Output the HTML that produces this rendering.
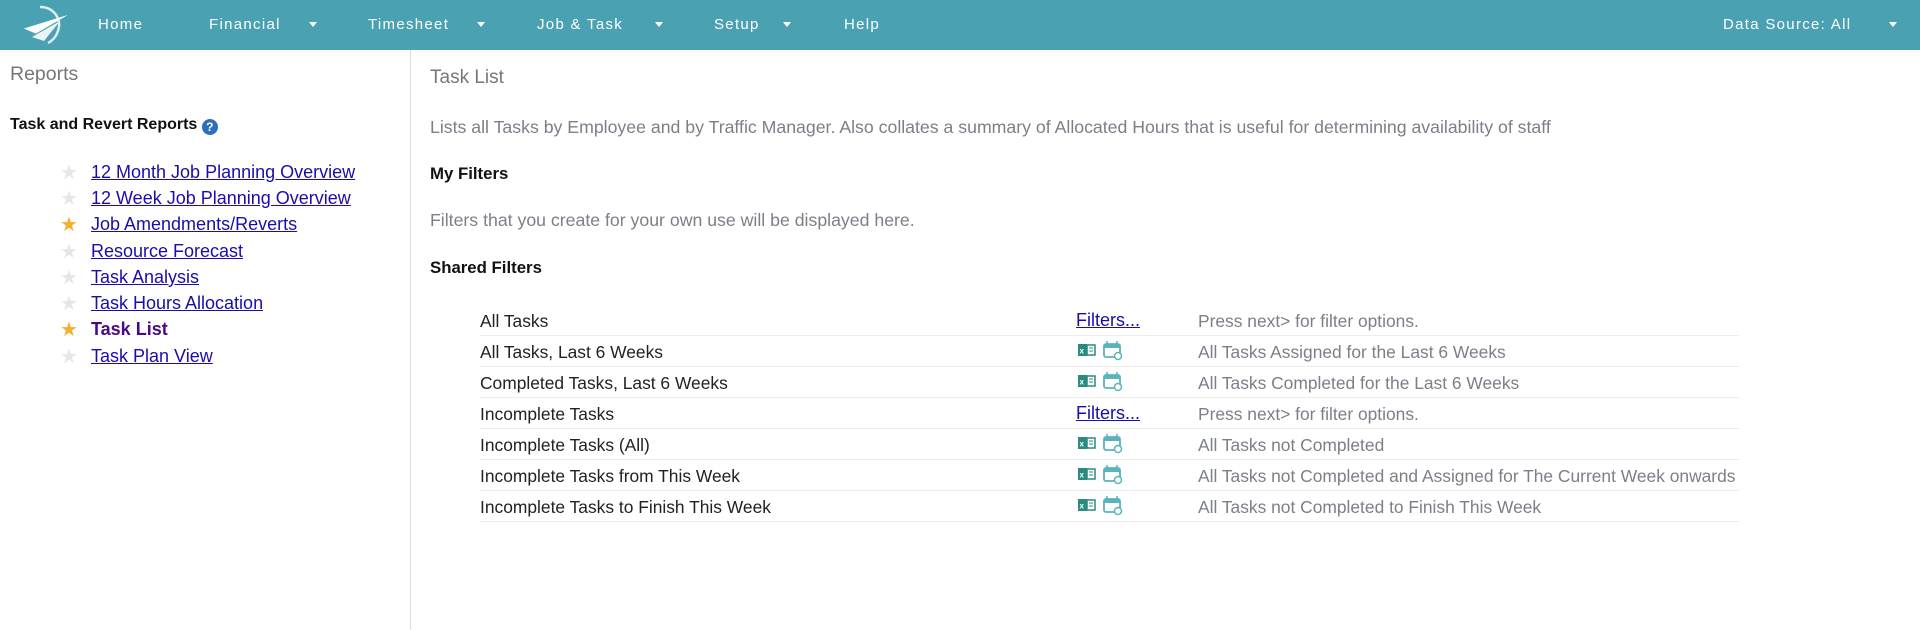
<!DOCTYPE html>
<html><head><meta charset="utf-8"><style>
*{margin:0;padding:0;box-sizing:border-box}
body{width:1920px;height:630px;background:#fff;font-family:"Liberation Sans",sans-serif;position:relative;overflow:hidden;color:#222}
.a{position:absolute;white-space:nowrap}
#nav{position:absolute;left:0;top:0;width:1920px;height:50px;background:#4aa1b1}
.n{position:absolute;top:16px;color:#fff;font-size:15px;letter-spacing:1.3px}
.ar{position:absolute;top:22px;width:0;height:0;border-left:4px solid transparent;border-right:4px solid transparent;border-top:5px solid #fff}
#side{position:absolute;left:410px;top:50px;width:1px;height:580px;background:#ddd}
.li{position:absolute;left:91px;font-size:18px;color:#1a0dab;text-decoration:underline}
.st{position:absolute;left:60px;font-size:20px;color:#e6e6e6}
.st.g{color:#f5ae2e}
.r{position:absolute;left:480px;width:1259px;height:31px;border-bottom:1px solid #ececec;font-size:17.4px}
.r .c1{position:absolute;left:0;top:6px;color:#222}
.r .c2{position:absolute;left:596px;top:5px;color:#1a0dab;text-decoration:underline;font-size:18px}
.r .c3{position:absolute;left:718px;top:6px;color:#7b7f88}
.ic{position:absolute;left:598px;top:5px}
.gr{color:#7b7f88}
</style></head><body>
<div id="nav">
<svg class="a" style="left:14px;top:3px" width="56" height="44" viewBox="0 0 56 44">
<path d="M26 4 C40 4 48 16 44 28 C42 34 38 38 34 40" fill="none" stroke="#d8eef2" stroke-width="2.5"/>
<path d="M14 30 L66 14 L28 36 Z" fill="#fff" transform="translate(-2,0) scale(0.85)"/>
<path d="M18 34 L46 18 L30 38 Z" fill="#e8f4f6"/>
</svg>
<div class="n" style="left:98px">Home</div>
<div class="n" style="left:209px">Financial</div><div class="ar" style="left:309px"></div>
<div class="n" style="left:368px">Timesheet</div><div class="ar" style="left:477px"></div>
<div class="n" style="left:537px">Job &amp; Task</div><div class="ar" style="left:655px"></div>
<div class="n" style="left:714px">Setup</div><div class="ar" style="left:783px"></div>
<div class="n" style="left:844px">Help</div>
<div class="n" style="left:1723px">Data Source: All</div><div class="ar" style="left:1889px"></div>
</div>
<div id="side"></div>
<div class="a" style="left:10px;top:63px;font-size:19.5px;color:#777">Reports</div>
<div class="a" style="left:10px;top:116px;font-size:16px;font-weight:bold;color:#111">Task and Revert Reports <span style="display:inline-block;width:16px;height:16px;border-radius:50%;background:#2d6fb8;color:#fff;font-size:12px;text-align:center;line-height:16px;vertical-align:-2px">?</span></div>
<div class="st" style="top:160px">★</div><div class="li" style="top:162px">12 Month Job Planning Overview</div>
<div class="st" style="top:186px">★</div><div class="li" style="top:188px">12 Week Job Planning Overview</div>
<div class="st g" style="top:212px">★</div><div class="li" style="top:214px">Job Amendments/Reverts</div>
<div class="st" style="top:239px">★</div><div class="li" style="top:241px">Resource Forecast</div>
<div class="st" style="top:265px">★</div><div class="li" style="top:267px">Task Analysis</div>
<div class="st" style="top:291px">★</div><div class="li" style="top:293px">Task Hours Allocation</div>
<div class="st g" style="top:317px">★</div><div class="li" style="top:319px;color:#4b0a82;font-weight:bold;text-decoration:none">Task List</div>
<div class="st" style="top:344px">★</div><div class="li" style="top:346px">Task Plan View</div>

<div class="a gr" style="left:430px;top:67px;font-size:19px;color:#777">Task List</div>
<div class="a gr" style="left:430px;top:117px;font-size:17.7px">Lists all Tasks by Employee and by Traffic Manager. Also collates a summary of Allocated Hours that is useful for determining availability of staff</div>
<div class="a" style="left:430px;top:164px;font-size:16.8px;font-weight:bold;color:#111">My Filters</div>
<div class="a gr" style="left:430px;top:210px;font-size:17.7px">Filters that you create for your own use will be displayed here.</div>
<div class="a" style="left:430px;top:258px;font-size:16.8px;font-weight:bold;color:#111">Shared Filters</div>

<svg width="0" height="0" style="position:absolute"><defs>
<g id="ic"><rect x="0" y="3" width="9" height="12" fill="#2a8a7e"/><text x="1.5" y="12.5" font-size="8" fill="#fff" font-family="Liberation Sans" font-weight="bold">x</text><rect x="9" y="4" width="8" height="10" fill="none" stroke="#2a8a7e" stroke-width="1.5"/><line x1="11" y1="7" x2="15" y2="7" stroke="#2a8a7e"/><line x1="11" y1="10" x2="15" y2="10" stroke="#2a8a7e"/>
<rect x="26" y="3" width="16" height="13" rx="2" fill="none" stroke="#5ab3bd" stroke-width="1.8"/><rect x="26" y="3" width="16" height="4" fill="#5ab3bd"/><line x1="29" y1="0" x2="29" y2="4" stroke="#5ab3bd" stroke-width="1.5"/><line x1="39" y1="0" x2="39" y2="4" stroke="#5ab3bd" stroke-width="1.5"/><circle cx="40" cy="15" r="3.5" fill="#fff" stroke="#5ab3bd" stroke-width="1.5"/></g>
</defs></svg>

<div class="r" style="top:305px"><span class="c1">All Tasks</span><span class="c2">Filters...</span><span class="c3">Press next&gt; for filter options.</span></div>
<div class="r" style="top:336px"><span class="c1">All Tasks, Last 6 Weeks</span><svg class="ic" width="46" height="20"><use href="#ic"/></svg><span class="c3">All Tasks Assigned for the Last 6 Weeks</span></div>
<div class="r" style="top:367px"><span class="c1">Completed Tasks, Last 6 Weeks</span><svg class="ic" width="46" height="20"><use href="#ic"/></svg><span class="c3">All Tasks Completed for the Last 6 Weeks</span></div>
<div class="r" style="top:398px"><span class="c1">Incomplete Tasks</span><span class="c2">Filters...</span><span class="c3">Press next&gt; for filter options.</span></div>
<div class="r" style="top:429px"><span class="c1">Incomplete Tasks (All)</span><svg class="ic" width="46" height="20"><use href="#ic"/></svg><span class="c3">All Tasks not Completed</span></div>
<div class="r" style="top:460px"><span class="c1">Incomplete Tasks from This Week</span><svg class="ic" width="46" height="20"><use href="#ic"/></svg><span class="c3">All Tasks not Completed and Assigned for The Current Week onwards</span></div>
<div class="r" style="top:491px"><span class="c1">Incomplete Tasks to Finish This Week</span><svg class="ic" width="46" height="20"><use href="#ic"/></svg><span class="c3">All Tasks not Completed to Finish This Week</span></div>
</body></html>
